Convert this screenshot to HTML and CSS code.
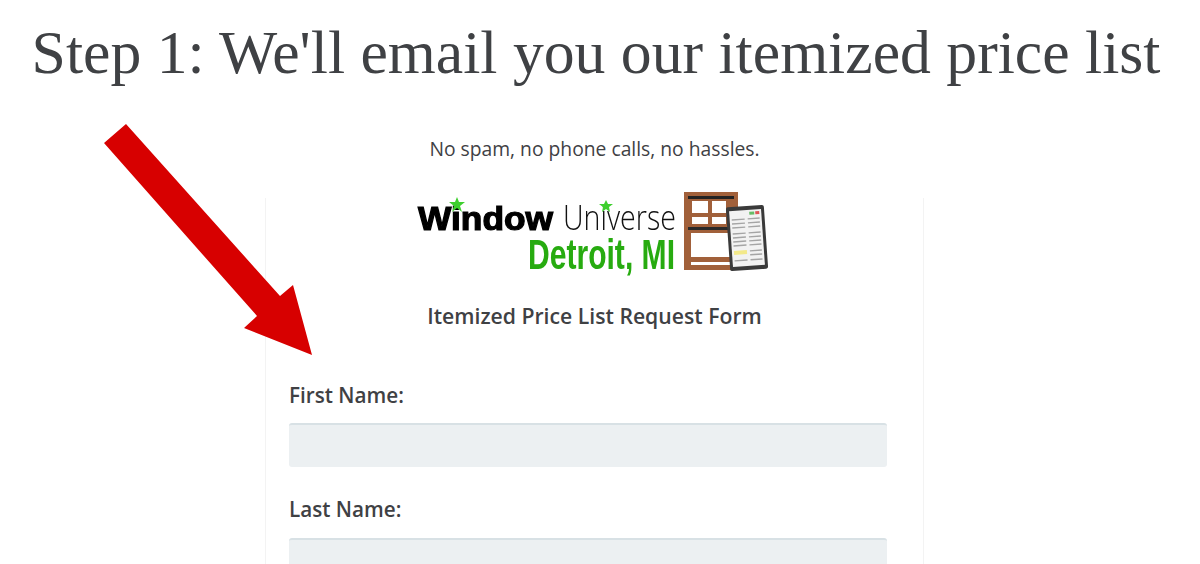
FILE: index.html
```html
<!DOCTYPE html>
<html lang="en">
<head>
    <meta charset="UTF-8">
    <title>Itemized Price List</title>
    <link rel="stylesheet" href="styles.css">
</head>
<body>
    <h1 class="headline">Step 1: We'll email you our itemized price list</h1>
    <svg class="arrow" width="240" height="260" viewBox="0 0 240 260">
        <polygon points="36,14 14,33 167,206 154,218 222,245 203,175 190,186" fill="#d70000"></polygon>
    </svg>
    <p class="tagline">No spam, no phone calls, no hassles.</p>
    <div class="card">
        <svg class="logo" width="360" height="90" viewBox="0 0 360 90">
            <text class="logo-bold" x="6" y="42" textLength="135" lengthAdjust="spacingAndGlyphs">Window</text>
            <text class="logo-thin" x="151" y="42" textLength="113" lengthAdjust="spacingAndGlyphs">Universe</text>
            <text class="logo-green" x="116" y="81" textLength="147" lengthAdjust="spacingAndGlyphs">Detroit, MI</text>
            <polygon points="45,9 47,14 53,14 48,18 50,24 45,20 40,24 42,18 37,14 43,14" fill="#3ecf2e"></polygon>
            <polygon points="194,12 196,16 201,16 197,19 198,24 194,21 190,24 191,19 187,16 192,16" fill="#3ecf2e"></polygon>
            <!-- window -->
            <rect x="272" y="4" width="54" height="78" fill="#a1603a"></rect>
            <rect x="276" y="8" width="46" height="3" fill="#222"></rect>
            <rect x="280" y="13" width="16" height="12" fill="#fff"></rect>
            <rect x="300" y="13" width="14" height="12" fill="#fff"></rect>
            <rect x="280" y="29" width="16" height="7" fill="#fff"></rect>
            <rect x="300" y="29" width="14" height="7" fill="#fff"></rect>
            <rect x="276" y="39" width="46" height="3" fill="#2a2a2a"></rect>
            <rect x="279" y="45" width="40" height="24" fill="#fff"></rect>
            <rect x="279" y="74" width="40" height="3" fill="#fff"></rect>
            <!-- tablet -->
            <g transform="rotate(-4 335 50)">
                <rect x="316" y="18" width="38" height="64" rx="2" fill="#3a3a3a"></rect>
                <rect x="319" y="22" width="32" height="56" fill="#f2f2f2"></rect>
                <path d="M321 31h13M337 31h12M321 35h13M337 35h12M321 39h13M337 39h12M321 45h13M337 45h12M321 49h13M337 49h12M321 53h13M337 53h12M321 57h13M337 57h12M337 63h12M337 67h12M321 72h13M337 72h12" stroke="#a5a5a5" stroke-width="1.4"></path>
                <rect x="321" y="62" width="13" height="4" fill="#f3e98a"></rect>
                <rect x="339" y="24" width="5" height="3" fill="#6b6"></rect>
                <rect x="345" y="24" width="4" height="3" fill="#d55"></rect>
            </g>
        </svg>
        <h2 class="form-title">Itemized Price List Request Form</h2>
        <div class="field">
            <label>First Name:</label>
            <div class="input"></div>
        </div>
        <div class="field">
            <label>Last Name:</label>
            <div class="input"></div>
        </div>
    </div>
</body>
</html>
```

FILE: styles.css
```css
html, body {
    height: 564px;
    overflow: hidden;
}
body {
    margin: 0;
    padding-right: 11px;
    background-color: #fff;
    color: #3f4144;
    font-family: "Open Sans", sans-serif;
    position: relative;
    box-sizing: border-box;
}
.headline {
    margin: 0;
    padding-top: 16px;
    padding-left: 3px;
    font-family: "Liberation Serif", serif;
    font-weight: normal;
    font-size: 61.7px;
    line-height: 72px;
    text-align: center;
    white-space: nowrap;
}
.arrow {
    position: absolute;
    left: 90px;
    top: 110px;
}
.tagline {
    margin: 49px 0 0;
    font-size: 19.3px;
    line-height: 24px;
    text-align: center;
}
.card {
    display: flow-root;
    width: 659px;
    margin: 37px auto 0;
    box-sizing: border-box;
    height: 366px;
    padding: 0 36px 0 23px;
    border-left: 1px solid #f3f3f3;
    border-right: 1px solid #f3f3f3;
}
.logo {
    display: block;
    margin: -10px auto 0 123px;
    filter: blur(.5px);
}
.logo-bold {
    font-family: "Liberation Sans", sans-serif;
    font-weight: bold;
    font-size: 33px;
    stroke: #000;
    stroke-width: 1.2;
    fill: #000;
}
.logo-thin {
    font-family: "Open Sans", sans-serif;
    font-weight: 300;
    font-size: 34px;
    fill: #111;
}
.logo-green {
    font-family: "Liberation Sans", sans-serif;
    font-weight: bold;
    font-size: 42px;
    fill: #27ab10;
}
.form-title {
    margin: 24px -13px 0 0;
    font-size: 21.2px;
    line-height: 28px;
    font-weight: 600;
    text-align: center;
}
.field label {
    display: block;
    font-size: 20.7px;
    line-height: 28px;
    font-weight: 600;
}
.form-title + .field {
    margin-top: 51px;
}
.field + .field {
    margin-top: 28px;
}
.input {
    width: 598px;
    height: 44px;
    margin-top: 14px;
    box-sizing: border-box;
    background-color: #ecf0f2;
    border-top: 2px solid #d8e1e5;
    border-radius: 3px;
}
/* second input is cut off by the window edge */
.field + .field .input {
    height: 26px;
    margin-top: 15px;
    border-radius: 3px 3px 0 0;
}
```
